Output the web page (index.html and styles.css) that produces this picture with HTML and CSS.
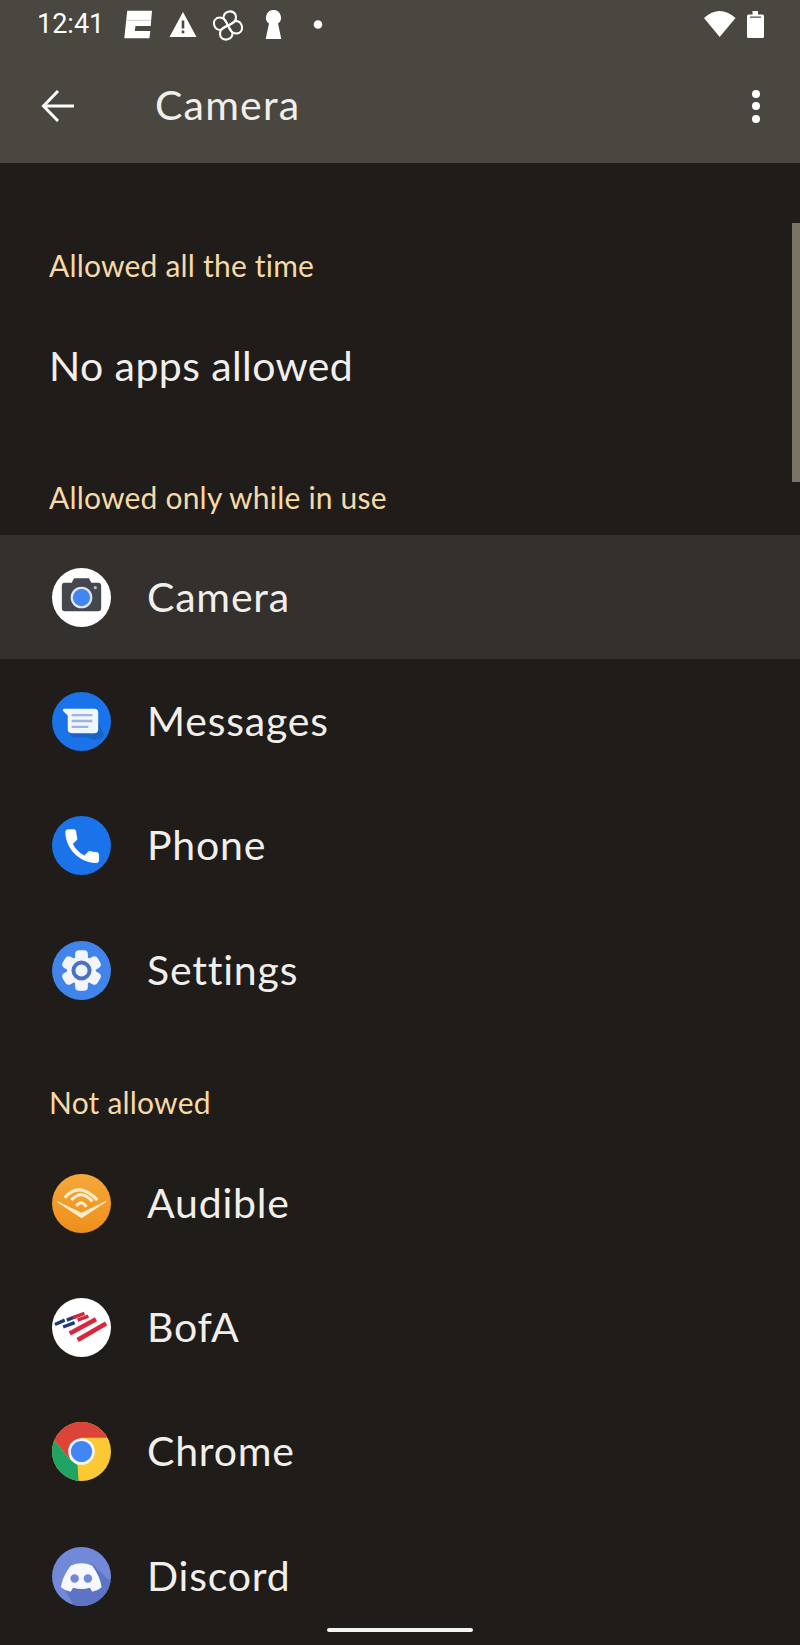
FILE: index.html
```html
<!DOCTYPE html>
<html lang="en">
<head>
    <meta charset="UTF-8">
    <meta name="viewport" content="width=device-width, initial-scale=1.0">
    <title>Camera</title>
    <link rel="stylesheet" href="styles.css">
</head>
<body>
    <div class="screen">
        <div class="app-header">
            <div class="status-bar">
                <span class="clock">12:41</span>
                <div class="status-icons">
                    <svg class="status-icon" viewBox="0 0 28 28"><path fill="#fff" d="M3.200 .7H28L26.700 16H11.500L10.800 21H26.300L25.400 28.300H.3z"/><rect x="2.500" y="9.800" width="24.500" height="1" fill="#cfcdc8"/></svg>
                    <svg class="status-icon" viewBox="0 0 28 28"><path fill="#fff" d="M14 2L27.500 27H.5z"/><path fill="#4a4740" d="M12.700 10.500H15.300V18.500H12.700zM12.700 20.500H15.300V23.300H12.700z"/></svg>
                    <svg class="status-icon" viewBox="0 0 28 28">
                        <g fill="none" stroke="#fff" stroke-width="2" stroke-linejoin="round">
                            <path id="fanBlade" d="M14 15.500L9.500 8A6.500 6.500 0 0 1 21.500 4.500Q24 12 14 15.500Z"/>
                            <use href="#fanBlade" transform="rotate(90 14 15.500)"/>
                            <use href="#fanBlade" transform="rotate(180 14 15.500)"/>
                            <use href="#fanBlade" transform="rotate(270 14 15.500)"/>
                        </g>
                    </svg>
                    <svg class="status-icon" viewBox="0 0 28 28"><path fill="#fff" d="M14.500 0A7.500 7.500 0 0 1 19 13.500L22.300 29H6.700L10 13.500A7.500 7.500 0 0 1 14.500 0Z"/></svg>
                    <svg class="status-icon" viewBox="0 0 28 28"><circle cx="14" cy="14.500" r="4.300" fill="#fff"/></svg>
                </div>
                <div class="status-right">
                    <svg class="wifi-icon" viewBox="0 0 32 28"><path fill="#fff" d="M0 8Q15.500 -6 31.500 8L15.700 27Z"/></svg>
                    <svg class="battery-icon" viewBox="0 0 17 27"><path fill="#fff" d="M5.500 0H11V3.500H15.500Q17 3.500 17 5V25.500Q17 27 15.500 27H1.500Q0 27 0 25.500V5Q0 3.500 1.500 3.500H5.500Z"/><rect x="3" y="5.500" width="11" height="1.300" fill="#5a5850"/></svg>
                </div>
            </div>
            <div class="toolbar">
                <svg class="back-icon" viewBox="0 0 34 34"><path fill="none" stroke="#fff" stroke-width="3" d="M33 17H3M17 2L2.500 17L17 32"/></svg>
                <h1 class="toolbar-title">Camera</h1>
                <div class="more-menu"><span></span><span></span><span></span></div>
            </div>
        </div>

        <div class="content">
            <h2 class="section-title first">Allowed all the time</h2>
            <p class="empty-text">No apps allowed</p>

            <h2 class="section-title second">Allowed only while in use</h2>
            <div class="app-row selected">
                <svg class="app-icon" viewBox="0 0 60 60">
                    <circle cx="30" cy="30" r="30" fill="#fff"/>
                    <path fill="#45474f" d="M13 15H20L22.500 10.500H37.500L40 15H47Q50 15 50 18V41Q50 44 47 44H13Q10 44 10 41V18Q10 15 13 15Z"/>
                    <circle cx="30" cy="30" r="11" fill="#dfe8fb"/>
                    <circle cx="30" cy="30" r="8.800" fill="#4285f4"/>
                    <circle cx="44" cy="20" r="1.600" fill="#b9bcc4"/>
                </svg>
                <span class="app-name">Camera</span>
            </div>
            <div class="app-row">
                <svg class="app-icon" viewBox="0 0 60 60">
                    <circle cx="30" cy="30" r="30" fill="#1a73e8"/>
                    <path fill="#1558b5" d="M16 38L47 30L53 44Q46 52 36 46H21Z" opacity=".6"/>
                    <path fill="#f1f5fd" d="M12.500 17H43Q47 17 47 21V38Q47 42 43 42H21Q16 42 16 38V24L11 19Q10.500 17 12.500 17Z"/>
                    <path fill="none" stroke="#9db4e0" stroke-width="2.400" d="M20 23.500H41M20 29.500H41M20 35.500H37"/>
                </svg>
                <span class="app-name">Messages</span>
            </div>
            <div class="app-row">
                <svg class="app-icon" viewBox="0 0 60 60">
                    <circle cx="30" cy="30" r="30" fill="#1a73e8"/>
                    <path fill="#fff" stroke="#fff" stroke-width=".5" transform="translate(8.500 8.500) scale(1.850)" d="M20 15.500c-1.250 0-2.450-.2-3.570-.57-.35-.11-.74-.03-1.020.24l-2.200 2.200c-2.830-1.440-5.150-3.750-6.590-6.590l2.200-2.210c.28-.26.36-.65.25-1C8.700 6.450 8.500 5.250 8.500 4c0-.55-.45-1-1-1H4c-.55 0-1 .45-1 1 0 9.390 7.610 17 17 17 .55 0 1-.45 1-1v-3.500c0-.55-.45-1-1-1z"/>
                </svg>
                <span class="app-name">Phone</span>
            </div>
            <div class="app-row">
                <svg class="app-icon" viewBox="0 0 60 60">
                    <circle cx="30" cy="30" r="30" fill="#4285ea"/>
                    <g fill="#f3f5fa">
                        <circle cx="30" cy="30" r="14.500"/>
                        <rect x="23.500" y="9.500" width="13" height="41" rx="4"/>
                        <rect x="23.500" y="9.500" width="13" height="41" rx="4" transform="rotate(60 30 30)"/>
                        <rect x="23.500" y="9.500" width="13" height="41" rx="4" transform="rotate(120 30 30)"/>
                    </g>
                    <circle cx="30" cy="30" r="8.200" fill="#eef1f8" stroke="#4a6fc4" stroke-width="4"/>
                </svg>
                <span class="app-name">Settings</span>
            </div>

            <h2 class="section-title third">Not allowed</h2>
            <div class="app-row">
                <svg class="app-icon" viewBox="0 0 60 60">
                    <defs><linearGradient id="audibleBg" x1="0" y1="0" x2="0" y2="1"><stop offset="0" stop-color="#f6a83a"/><stop offset="1" stop-color="#ee8f1c"/></linearGradient></defs>
                    <circle cx="30" cy="30" r="30" fill="url(#audibleBg)"/>
                    <path fill="#fdeec9" d="M5 27.500L30 39.500L55 27.500V28.500L30 45L5 28.500Z"/>
                    <g fill="none" stroke="#fdeec9" stroke-width="3.200">
                        <path d="M13 24Q28 7 46 26.500"/>
                        <path d="M19.700 26.500Q30 15 41 28"/>
                        <path d="M24.700 32.500Q30 25.500 35 33.500"/>
                    </g>
                </svg>
                <span class="app-name">Audible</span>
            </div>
            <div class="app-row">
                <svg class="app-icon" viewBox="0 0 60 60">
                    <circle cx="30" cy="30" r="30" fill="#fff"/>
                    <g fill="none">
                        <path stroke="#1f3a7a" stroke-width="3.400" d="M3 27L13 22.500M11.300 29.500L23 25M15 22.500L25 18.500"/>
                        <path stroke="#d9263d" stroke-width="3.400" d="M21.300 20L33 15.700M26 22.500L37 18.500"/>
                        <path stroke="#d9263d" stroke-width="4.600" d="M18 36L44.700 21.700M26 42.700L55 26"/>
                    </g>
                </svg>
                <span class="app-name">BofA</span>
            </div>
            <div class="app-row">
                <svg class="app-icon" viewBox="0 0 60 60">
                    <defs><clipPath id="chromeClip"><circle cx="30" cy="30" r="30"/></clipPath></defs>
                    <g clip-path="url(#chromeClip)">
                        <rect width="60" height="60" fill="#fcc934"/>
                        <path fill="#db4437" d="M0 0H60V16H30L18 38L0 16Z"/>
                        <path fill="#1fa463" d="M0 16L18 38L26 44L27 60H0Z"/>
                    </g>
                    <circle cx="30" cy="30" r="13.500" fill="#f2f6fe"/>
                    <circle cx="30" cy="30" r="10.800" fill="#4285f4"/>
                </svg>
                <span class="app-name">Chrome</span>
            </div>
            <div class="app-row">
                <svg class="app-icon" viewBox="0 0 60 60">
                    <defs><clipPath id="discordClip"><circle cx="30" cy="30" r="30"/></clipPath></defs>
                    <circle cx="30" cy="30" r="30" fill="#7289da"/>
                    <path clip-path="url(#discordClip)" fill="#5d73c4" d="M40 17L65 40V65H25L14 45z"/>
                    <path fill="#f7f8fd" d="M19 19Q30 14 41 19Q49 30 50.500 41Q46 45 41 45.500L38.500 41.500Q30 44 21.500 41.500L19 45.500Q14 45 9 41Q10.500 30 19 19Z"/>
                    <circle cx="23" cy="32" r="4.300" fill="#7289da"/>
                    <circle cx="36.500" cy="32" r="4.300" fill="#7289da"/>
                </svg>
                <span class="app-name">Discord</span>
            </div>
        </div>

        <div class="scroll-thumb"></div>
        <div class="nav-handle"></div>
    </div>
</body>
</html>
```

FILE: styles.css
```css
html, body {
    margin: 0;
    padding: 0;
    background-color: #1f1c19;
}
.screen {
    position: relative;
    width: 800px;
    height: 1645px;
    overflow: hidden;
    font-family: Lato, sans-serif;
    color: #f1efec;
}

/* Header */
.app-header {
    height: 163px;
    background-color: #4a4740;
}
.status-bar {
    display: flex;
    align-items: flex-start;
    height: 58px;
    padding: 10px 36px 0 37px;
    box-sizing: border-box;
}
.clock {
    width: 87px;
    font-family: Roboto, sans-serif;
    font-size: 27px;
    line-height: 28px;
    color: #fff;
}
.status-icons {
    display: flex;
    gap: 17px;
}
.status-icon {
    width: 28px;
    height: 28px;
    overflow: visible;
}
.status-right {
    display: flex;
    gap: 11px;
    margin-left: auto;
}
.wifi-icon {
    width: 32px;
    height: 28px;
}
.battery-icon {
    width: 17px;
    height: 27px;
    margin-top: 1px;
}
.toolbar {
    display: flex;
    align-items: center;
    height: 96px;
    padding: 0 41px;
}
.back-icon {
    width: 34px;
    height: 34px;
}
.toolbar-title {
    margin: 0 0 4px 80px;
    font-size: 41px;
    font-weight: 400;
    letter-spacing: 1.200px;
}
.more-menu {
    display: flex;
    flex-direction: column;
    gap: 4.500px;
    margin-left: auto;
    margin-right: -1px;
}
.more-menu span {
    width: 8px;
    height: 8px;
    border-radius: 50%;
    background-color: #fff;
}

/* List */
.section-title {
    margin: 0 0 0 49px;
    font-size: 30px;
    line-height: 36px;
    font-weight: 400;
    letter-spacing: .2px;
    color: #f7d9a8;
}
.section-title.first {
    padding-top: 84px;
}
.section-title.second {
    padding-top: 87px;
    padding-bottom: 20px;
}
.section-title.third {
    padding-top: 52px;
    padding-bottom: 21px;
}
.empty-text {
    margin: 0 0 0 49px;
    padding-top: 57px;
    font-size: 41px;
    line-height: 52px;
    font-weight: 400;
    letter-spacing: .4px;
}
.app-row {
    display: flex;
    align-items: center;
    gap: 36px;
    height: 124.300px;
    padding-left: 52px;
}
.app-row.selected {
    background-color: #34302d;
}
.app-icon {
    width: 59px;
    height: 59px;
    flex-shrink: 0;
}
.app-name {
    padding-bottom: 2px;
    font-size: 41px;
    font-weight: 400;
    letter-spacing: .8px;
}

.scroll-thumb {
    position: absolute;
    top: 223px;
    right: 0;
    width: 8px;
    height: 259px;
    background-color: #7a7368;
}
.nav-handle {
    position: absolute;
    left: 327px;
    bottom: 13px;
    width: 146px;
    height: 4px;
    border-radius: 2px;
    background-color: #f4f4f2;
}
```
